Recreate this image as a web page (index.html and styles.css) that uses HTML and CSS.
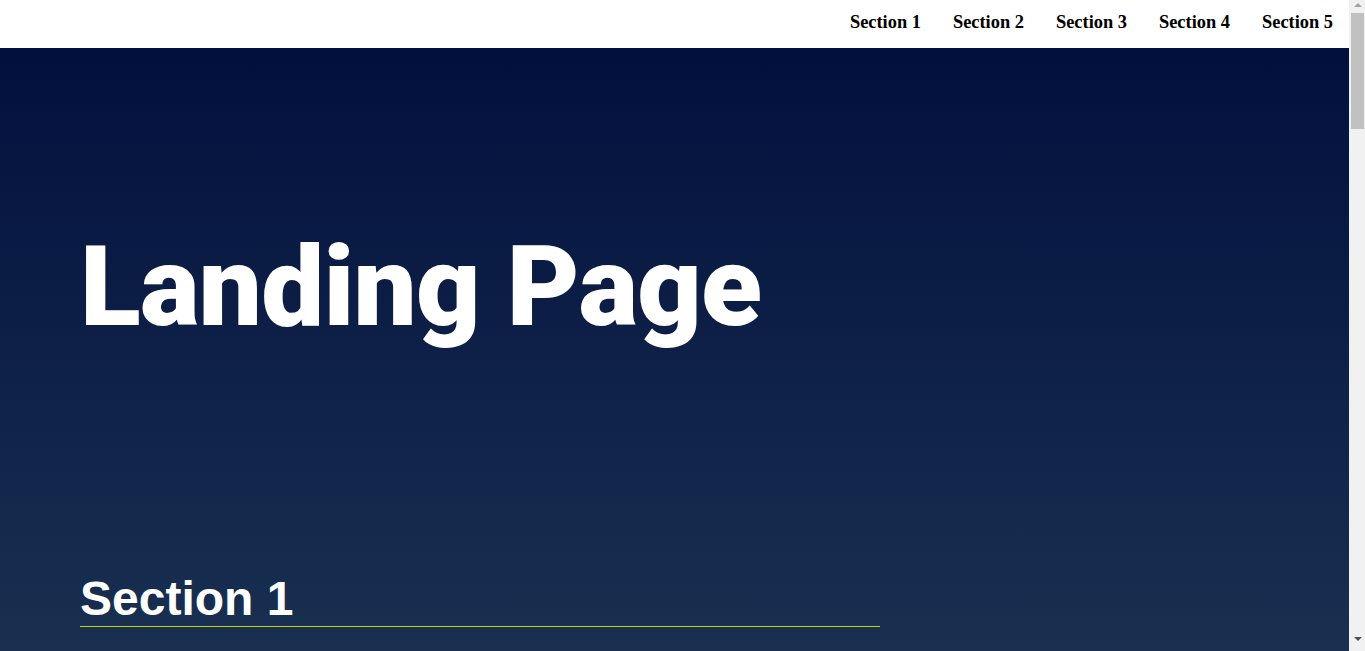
FILE: index.html
```html
<!DOCTYPE html>
<html lang="en">
<head>
<meta charset="utf-8">
<title>Landing Page</title>
<link rel="stylesheet" href="styles.css">
</head>
<body>
<header class="page-header">
  <nav class="navbar">
    <ul class="navbar-list">
      <li><a class="menu-link" href="#section1">Section 1</a></li>
      <li><a class="menu-link" href="#section2">Section 2</a></li>
      <li><a class="menu-link" href="#section3">Section 3</a></li>
      <li><a class="menu-link" href="#section4">Section 4</a></li>
      <li><a class="menu-link" href="#section5">Section 5</a></li>
    </ul>
  </nav>
</header>
<main class="page-main">
  <header class="hero">
    <h1 class="hero-title">Landing Page</h1>
  </header>
  <section id="section1" class="section">
    <div class="landing-container">
      <h2 class="section-title">Section 1</h2>
      <p class="section-text">Lorem ipsum dolor sit amet, consectetur adipiscing elit. Morbi fermentum metus faucibus lectus pharetra dapibus. Suspendisse potenti. Ut a sem at libero convallis rhoncus. Curabitur ut tellus non nisi luctus maximus in vitae leo.</p>
      <p class="section-text">Aliquam a convallis justo. Vivamus venenatis, erat eget pulvinar gravida, ipsum lacus aliquet velit, vel luctus diam ipsum a diam. Cras eu tincidunt arcu, vitae rhoncus purus.</p>
    </div>
  </section>
  <section id="section2" class="section">
    <div class="landing-container">
      <h2 class="section-title">Section 2</h2>
      <p class="section-text">Lorem ipsum dolor sit amet, consectetur adipiscing elit. Morbi fermentum metus faucibus lectus pharetra dapibus. Suspendisse potenti. Ut a sem at libero convallis rhoncus.</p>
      <p class="section-text">Aliquam a convallis justo. Vivamus venenatis, erat eget pulvinar gravida, ipsum lacus aliquet velit, vel luctus diam ipsum a diam.</p>
    </div>
  </section>
  <section id="section3" class="section">
    <div class="landing-container">
      <h2 class="section-title">Section 3</h2>
      <p class="section-text">Lorem ipsum dolor sit amet, consectetur adipiscing elit. Morbi fermentum metus faucibus lectus pharetra dapibus. Suspendisse potenti.</p>
      <p class="section-text">Aliquam a convallis justo. Vivamus venenatis, erat eget pulvinar gravida, ipsum lacus aliquet velit.</p>
    </div>
  </section>
  <section id="section4" class="section">
    <div class="landing-container">
      <h2 class="section-title">Section 4</h2>
      <p class="section-text">Lorem ipsum dolor sit amet, consectetur adipiscing elit. Morbi fermentum metus faucibus lectus pharetra dapibus.</p>
      <p class="section-text">Aliquam a convallis justo. Vivamus venenatis, erat eget pulvinar gravida.</p>
    </div>
  </section>
  <section id="section5" class="section">
    <div class="landing-container">
      <h2 class="section-title">Section 5</h2>
      <p class="section-text">Lorem ipsum dolor sit amet, consectetur adipiscing elit. Morbi fermentum metus faucibus lectus pharetra dapibus.</p>
      <p class="section-text">Aliquam a convallis justo. Vivamus venenatis, erat eget pulvinar gravida.</p>
    </div>
  </section>
</main>
<footer class="page-footer">
  <p class="footer-text">&copy; Landing Page</p>
</footer>
<div class="fake-scrollbar" aria-hidden="true">
  <div class="scroll-btn scroll-btn-up"><span class="arrow-up"></span></div>
  <div class="scroll-track"><div class="scroll-thumb"></div></div>
  <div class="scroll-btn scroll-btn-down"><span class="arrow-down"></span></div>
</div>
</body>
</html>
```

FILE: styles.css
```css
html {
  margin: 0;
}

body {
  margin: 0;
  padding-right: 16px;
  background: rgb(136, 203, 171);
  background: linear-gradient(0deg, rgba(136, 203, 171, 1) 0%, rgba(0, 13, 60, 1) 100%);
  font-family: "Liberation Serif", "DejaVu Serif", serif;
  color: #fff;
}

.page-header {
  position: fixed;
  top: 0;
  left: 0;
  right: 16px;
  background: #fff;
  z-index: 5;
}

.navbar-list {
  list-style: none;
  margin: 0;
  padding: 0;
  display: flex;
  justify-content: flex-end;
}

.menu-link {
  display: block;
  padding: 14px 16px 18px;
  font-family: "Liberation Serif", serif;
  font-size: 18.4px;
  line-height: 16px;
  font-weight: bold;
  color: #000;
  text-decoration: none;
}

.hero {
  padding-top: 48px;
}

.hero-title {
  font-family: Roboto, Lato, sans-serif;
  font-weight: 900;
  font-size: 112px;
  line-height: 134px;
  letter-spacing: -0.75px;
  margin: 172px 64px 107px 80px;
  color: #fff;
}

.section {
  min-height: 600px;
}

.landing-container {
  max-width: 800px;
  padding: 64px 64px 64px 80px;
}

.section-title {
  font-family: "Liberation Sans", Arial, sans-serif;
  font-weight: bold;
  font-size: 48px;
  line-height: 55px;
  margin: 46px 0 40px;
  border-bottom: 1px solid #cccc11;
  color: #fff;
}

.section-text {
  font-size: 16px;
  line-height: 1.6;
  margin: 0 0 16px;
}

.page-footer {
  padding: 24px 80px;
}

.footer-text {
  margin: 0;
  font-size: 14px;
  color: #000;
}

/* classic browser scrollbar drawn over the right edge */
.fake-scrollbar {
  position: fixed;
  top: 0;
  right: 0;
  width: 16px;
  height: 100vh;
  background: #f1f1f1;
  display: flex;
  flex-direction: column;
  z-index: 10;
}

.scroll-btn {
  height: 12px;
  display: flex;
  justify-content: center;
  align-items: center;
  flex: none;
}

.scroll-track {
  flex: 1;
  padding: 1px 1px 0 2px;
}

.scroll-thumb {
  height: 116px;
  background: #c1c1c1;
}

.arrow-up {
  width: 0;
  height: 0;
  border-left: 4px solid transparent;
  border-right: 4px solid transparent;
  border-bottom: 4px solid #a3a3a3;
  margin-top: -3px;
  margin-left: 1px;
}

.arrow-down {
  width: 0;
  height: 0;
  border-left: 4px solid transparent;
  border-right: 4px solid transparent;
  border-top: 4px solid #505050;
  margin-top: 6px;
  margin-left: 1px;
}

.scroll-btn-down {
  height: 20px;
  align-items: flex-start;
}
```
